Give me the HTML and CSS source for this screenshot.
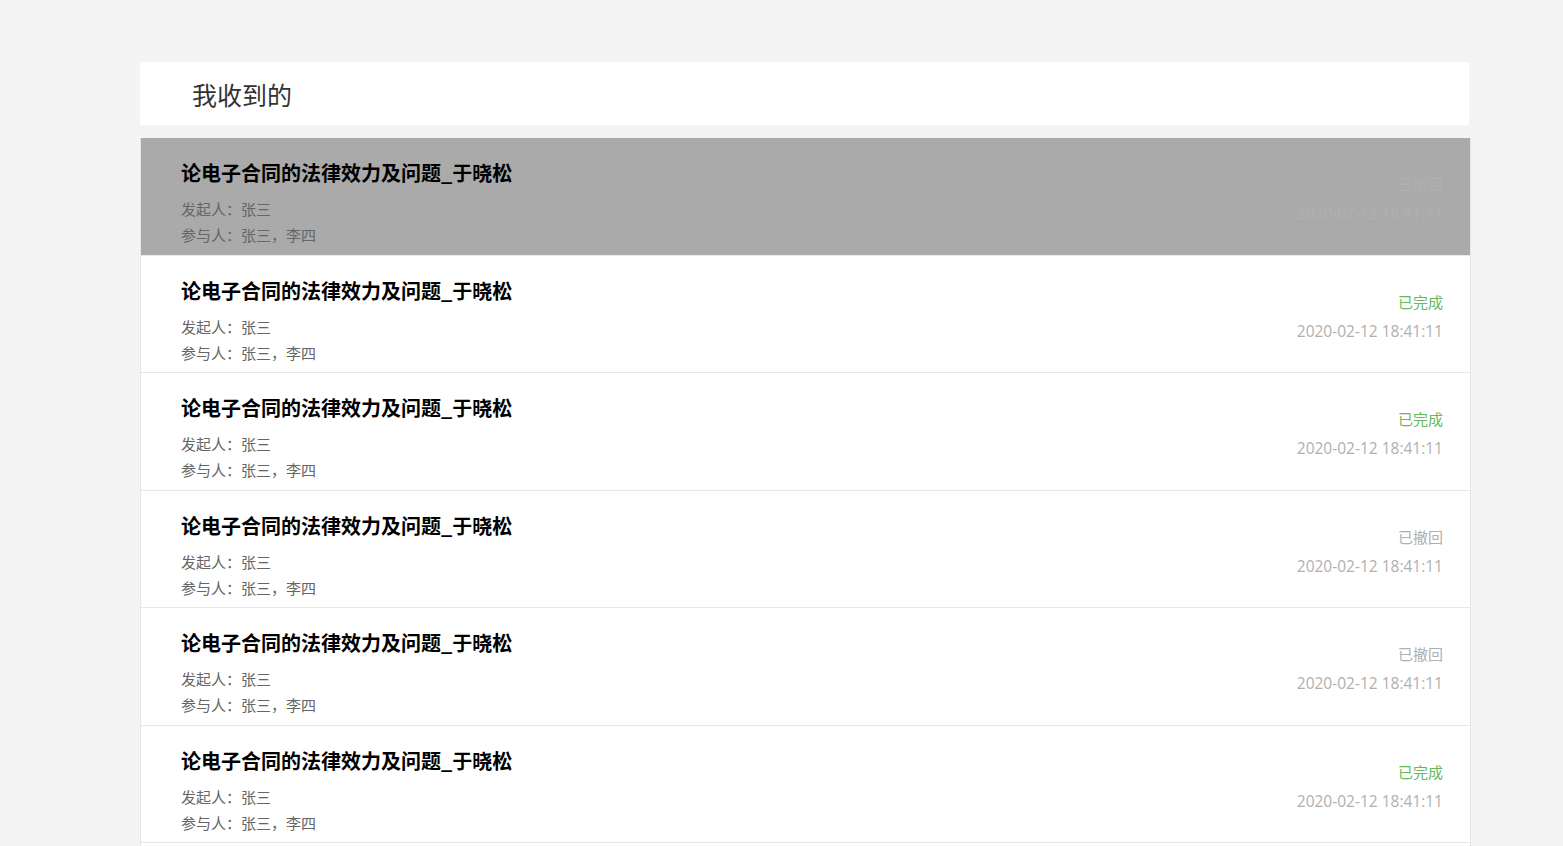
FILE: index.html
```html
<!DOCTYPE html>
<html lang="zh-CN">
<head>
<meta charset="utf-8">
<title>我收到的</title>
<link rel="stylesheet" href="styles.css">
</head>
<body>
<div class="page">
  <div class="header"><h1 class="header-title">我收到的</h1></div>
  <ul class="list">
    <li class="row row-active">
      <div class="row-main">
        <div class="row-title">论电子合同的法律效力及问题_于晓松</div>
        <div class="row-meta">发起人：张三</div>
        <div class="row-meta">参与人：张三，李四</div>
      </div>
      <div class="row-side">
        <div class="status status-withdrawn">已撤回</div>
        <div class="date">2020-02-12 18:41:11</div>
      </div>
    </li>
    <li class="row">
      <div class="row-main">
        <div class="row-title">论电子合同的法律效力及问题_于晓松</div>
        <div class="row-meta">发起人：张三</div>
        <div class="row-meta">参与人：张三，李四</div>
      </div>
      <div class="row-side">
        <div class="status status-done">已完成</div>
        <div class="date">2020-02-12 18:41:11</div>
      </div>
    </li>
    <li class="row">
      <div class="row-main">
        <div class="row-title">论电子合同的法律效力及问题_于晓松</div>
        <div class="row-meta">发起人：张三</div>
        <div class="row-meta">参与人：张三，李四</div>
      </div>
      <div class="row-side">
        <div class="status status-done">已完成</div>
        <div class="date">2020-02-12 18:41:11</div>
      </div>
    </li>
    <li class="row">
      <div class="row-main">
        <div class="row-title">论电子合同的法律效力及问题_于晓松</div>
        <div class="row-meta">发起人：张三</div>
        <div class="row-meta">参与人：张三，李四</div>
      </div>
      <div class="row-side">
        <div class="status status-withdrawn">已撤回</div>
        <div class="date">2020-02-12 18:41:11</div>
      </div>
    </li>
    <li class="row">
      <div class="row-main">
        <div class="row-title">论电子合同的法律效力及问题_于晓松</div>
        <div class="row-meta">发起人：张三</div>
        <div class="row-meta">参与人：张三，李四</div>
      </div>
      <div class="row-side">
        <div class="status status-withdrawn">已撤回</div>
        <div class="date">2020-02-12 18:41:11</div>
      </div>
    </li>
    <li class="row">
      <div class="row-main">
        <div class="row-title">论电子合同的法律效力及问题_于晓松</div>
        <div class="row-meta">发起人：张三</div>
        <div class="row-meta">参与人：张三，李四</div>
      </div>
      <div class="row-side">
        <div class="status status-done">已完成</div>
        <div class="date">2020-02-12 18:41:11</div>
      </div>
    </li>
  </ul>
</div>
</body>
</html>
```
FILE: styles.css
```css
html, body {
  margin: 0;
  padding: 0;
  background: #f4f4f4;
  font-family: "Noto Sans CJK SC", "Noto Sans", sans-serif;
}
.page {
  padding: 62px 0 0 140px;
  width: 1331px;
}
.header {
  width: 1329px;
  height: 63px;
  background: #fff;
  display: flex;
  align-items: center;
  padding-left: 52px;
  box-sizing: border-box;
}
.header-title {
  margin: 0;
  font-size: 25px;
  font-weight: normal;
  color: #333;
  line-height: 30px;
}
.list {
  list-style: none;
  margin: 13px 0 0 0;
  padding: 0 0 20px 0;
  background: #fff;
  border-left: 1px solid #e6e6e6;
  border-right: 1px solid #e6e6e6;
}
.row {
  display: flex;
  justify-content: space-between;
  padding: 22px 27px 6.5px 40px;
  border-bottom: 1px solid #e8e8e8;
  background: #fff;
}
.row-active {
  background: #aaaaaa;
}
.row-title {
  font-size: 20px;
  font-weight: bold;
  color: #000;
  line-height: 26px;
  margin-bottom: 10px;
}
.row-meta {
  font-size: 15px;
  color: #666;
  line-height: 26px;
}
.row-side {
  display: flex;
  flex-direction: column;
  align-items: flex-end;
  padding-top: 14px;
}
.status {
  font-size: 15px;
  line-height: 20px;
  margin-bottom: 9px;
}
.status-done {
  color: #67b95a;
}
.status-withdrawn {
  color: #b0b0b0;
}
.date {
  font-family: "Open Sans", "Liberation Sans", sans-serif;
  font-size: 15.5px;
  line-height: 20px;
  color: #b0b0b0;
}
```
